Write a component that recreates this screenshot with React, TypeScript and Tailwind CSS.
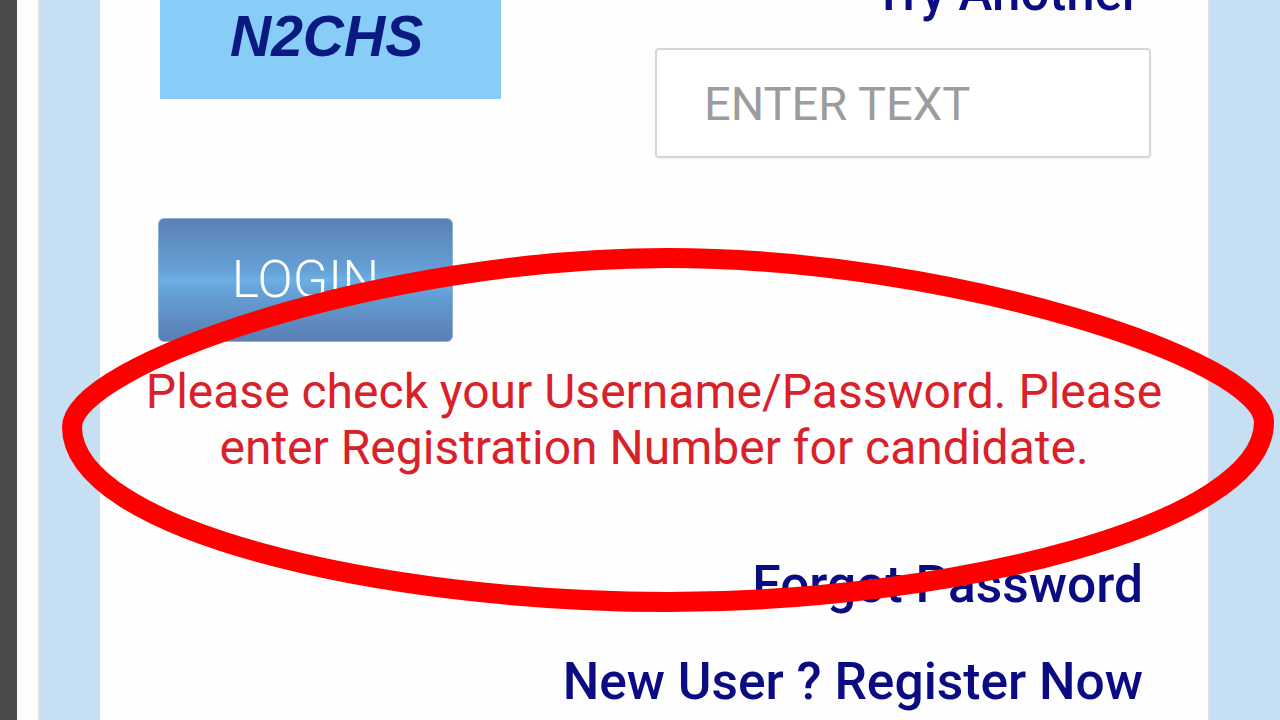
import React from "react";

const ROBOTO = "font-['Roboto','Liberation_Sans',sans-serif]";

// hand-drawn red ring: four cubic quarters, a bit pointier on the right
const RING_D = [
  "M 72 427",
  "C 72 365 380 258 668 258",
  "C 950 258 1264 360 1264 422",
  "C 1264 525 950 602 668 602",
  "C 380 602 72 530 72 427",
  "Z",
].join(" ");

const Ring = () => (
  <svg
    className="pointer-events-none absolute inset-0"
    width={1280}
    height={720}
    viewBox="0 0 1280 720"
  >
    <path d={RING_D} fill="none" stroke="#ff0000" strokeWidth={20} />
  </svg>
);

export default function App() {
  return (
    <div className="relative flex h-[720px] w-[1280px] overflow-hidden bg-white">
      {/* screen edge */}
      <div className="w-[17px] shrink-0 bg-[#4a4a4a]" />
      <div className="w-[21px] shrink-0 bg-[#fdfdfd]" />
      <div className="w-[62px] shrink-0 border-l-2 border-[#e3dde6] bg-[#c6dff3]" />

      {/* login panel */}
      <div className="flex w-[1110px] shrink-0 flex-col border-r-2 border-[#e0dbe4] bg-[#fefefe]">
        <div className="flex items-start justify-between pl-[60px] pr-[57px]">
          <div className="h-[99px] w-[341px] bg-[#88cdf8] pl-[70px] pt-[8px]">
            <span className="font-['Liberation_Sans',Arial,sans-serif] text-[57px] font-bold italic leading-[57px] text-[#0b1a80]">
              N2CHS
            </span>
          </div>

          <div className="flex w-[496px] flex-col">
            <div
              className={`${ROBOTO} -mt-[33px] h-[51px] pr-[11px] text-right text-[51px] font-medium leading-[51px] text-[#0b0b82]`}
            >
              Try Another
            </div>
            <div className="mt-[30px] flex h-[110px] items-center rounded-[4px] border-2 border-[#d6d6d6] bg-white pl-[47px] shadow-[0_1px_2px_rgba(0,0,0,0.06)]">
              <span className={`${ROBOTO} text-[47px] leading-none text-[#9c9c9c]`}>
                ENTER TEXT
              </span>
            </div>
          </div>
        </div>

        <button
          className={`${ROBOTO} ml-[58px] mt-[60px] flex h-[124px] w-[295px] items-center justify-center rounded-[6px] border border-[#8db3d9] bg-[linear-gradient(180deg,#5b80b4_0%,#64a0d6_42%,#6cb0e4_50%,#64a0d6_60%,#5a7fb3_100%)] text-[52px] font-light leading-none text-white`}
        >
          LOGIN
        </button>

        <p
          className={`${ROBOTO} mt-[22px] text-center text-[48px] leading-[56px] text-[#d9212a]`}
        >
          Please check your Username/Password. Please
          <br />
          enter Registration Number for candidate.
        </p>

        <div
          className={`${ROBOTO} mt-[79px] flex flex-col items-end gap-[37px] pr-[65px] text-[51.5px] font-medium leading-[60px] text-[#0b0b82]`}
        >
          <span>Forgot Password</span>
          <span>New User ? Register Now</span>
        </div>
      </div>

      <div className="flex-1 bg-[#c6dff3]" />

      <Ring />
    </div>
  );
}
